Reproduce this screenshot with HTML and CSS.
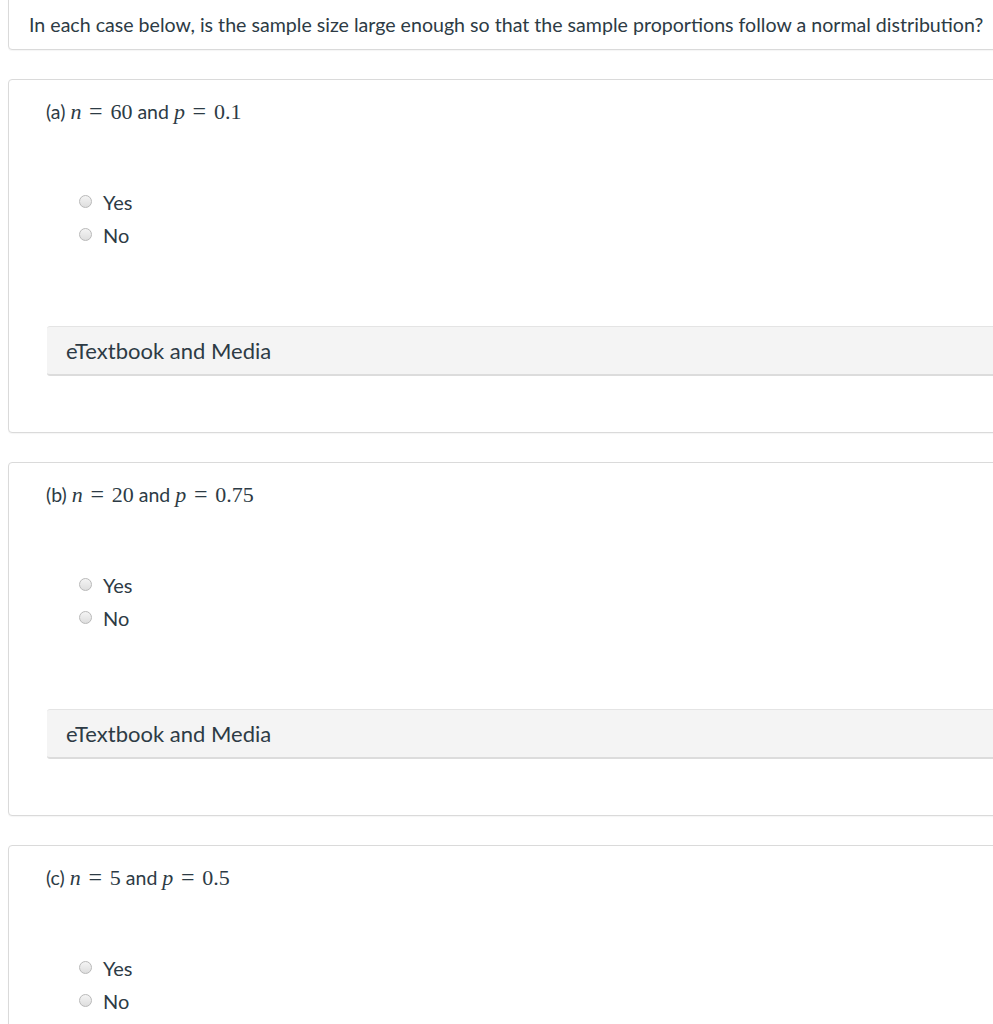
FILE: index.html
```html
<!DOCTYPE html>
<html lang="en">
<head>
<meta charset="utf-8">
<title>Sample proportions</title>
<link rel="stylesheet" href="styles.css">
</head>
<body>
<div class="page">
  <div class="card intro">
    <p class="intro-text">In each case below, is the sample size large enough so that the sample proportions follow a normal distribution?</p>
  </div>

  <div class="card part">
    <p class="question">(a) <span class="math"><i>n</i><span class="eq">=</span>60</span> and <span class="math"><i>p</i><span class="eq">=</span>0.1</span></p>
    <div class="options">
      <label class="option"><input type="radio" name="a"><span>Yes</span></label>
      <label class="option"><input type="radio" name="a"><span>No</span></label>
    </div>
    <div class="media">eTextbook and Media</div>
  </div>

  <div class="card part">
    <p class="question">(b) <span class="math"><i>n</i><span class="eq">=</span>20</span> and <span class="math"><i>p</i><span class="eq">=</span>0.75</span></p>
    <div class="options">
      <label class="option"><input type="radio" name="b"><span>Yes</span></label>
      <label class="option"><input type="radio" name="b"><span>No</span></label>
    </div>
    <div class="media">eTextbook and Media</div>
  </div>

  <div class="card part">
    <p class="question">(c) <span class="math"><i>n</i><span class="eq">=</span>5</span> and <span class="math"><i>p</i><span class="eq">=</span>0.5</span></p>
    <div class="options">
      <label class="option"><input type="radio" name="c"><span>Yes</span></label>
      <label class="option"><input type="radio" name="c"><span>No</span></label>
    </div>
    <div class="media">eTextbook and Media</div>
  </div>
</div>
</body>
</html>
```

FILE: styles.css
```css
html {
  overflow: hidden;
}
body {
  margin: 0;
  background: #ffffff;
  color: #2d3b45;
  font-family: Lato, "Liberation Sans", sans-serif;
}
.page {
  padding-left: 8px;
  width: 1020px;
}
.card {
  border: 1px solid #dadada;
  border-radius: 4px;
  box-shadow: 0 1px 1px rgba(0,0,0,0.04);
  background: #fff;
}
.intro {
  margin-top: -10px;
  padding: 22px 0 12px 20px;
}
.intro-text {
  margin: 0;
  font-size: 19.6px;
  line-height: 24px;
}
.part {
  margin-top: 29px;
  padding: 19px 0 56px 37px;
}
.question {
  margin: 0;
  font-size: 19.5px;
  line-height: 26px;
}
.math {
  font-family: "Liberation Serif", "Times New Roman", serif;
  font-size: 22px;
}
.math i {
  font-style: italic;
}
.eq {
  display: inline-block;
  width: 17px;
  margin: 0 6px;
  text-align: center;
  font-size: 24px;
  line-height: 20px;
}
.options {
  margin-top: 60px;
  margin-left: 33px;
  display: flex;
  flex-direction: column;
}
.option {
  display: flex;
  align-items: center;
  height: 33px;
  font-size: 20px;
}
.option input {
  appearance: none;
  -webkit-appearance: none;
  margin: 0 11px 0 0;
  width: 13px;
  height: 13px;
  border-radius: 50%;
  border: 1px solid #b9b9b9;
  background: linear-gradient(#f4f4f4, #dedede);
  box-sizing: border-box;
}
.media {
  margin-top: 75px;
  margin-left: 1px;
  height: 50px;
  box-sizing: border-box;
  display: flex;
  align-items: center;
  padding-left: 19px;
  background: #f4f4f4;
  border-top: 1px solid #e4e4e4;
  border-bottom: 2px solid #dcdcdc;
  border-radius: 3px 0 0 3px;
  font-size: 22px;
}
```
